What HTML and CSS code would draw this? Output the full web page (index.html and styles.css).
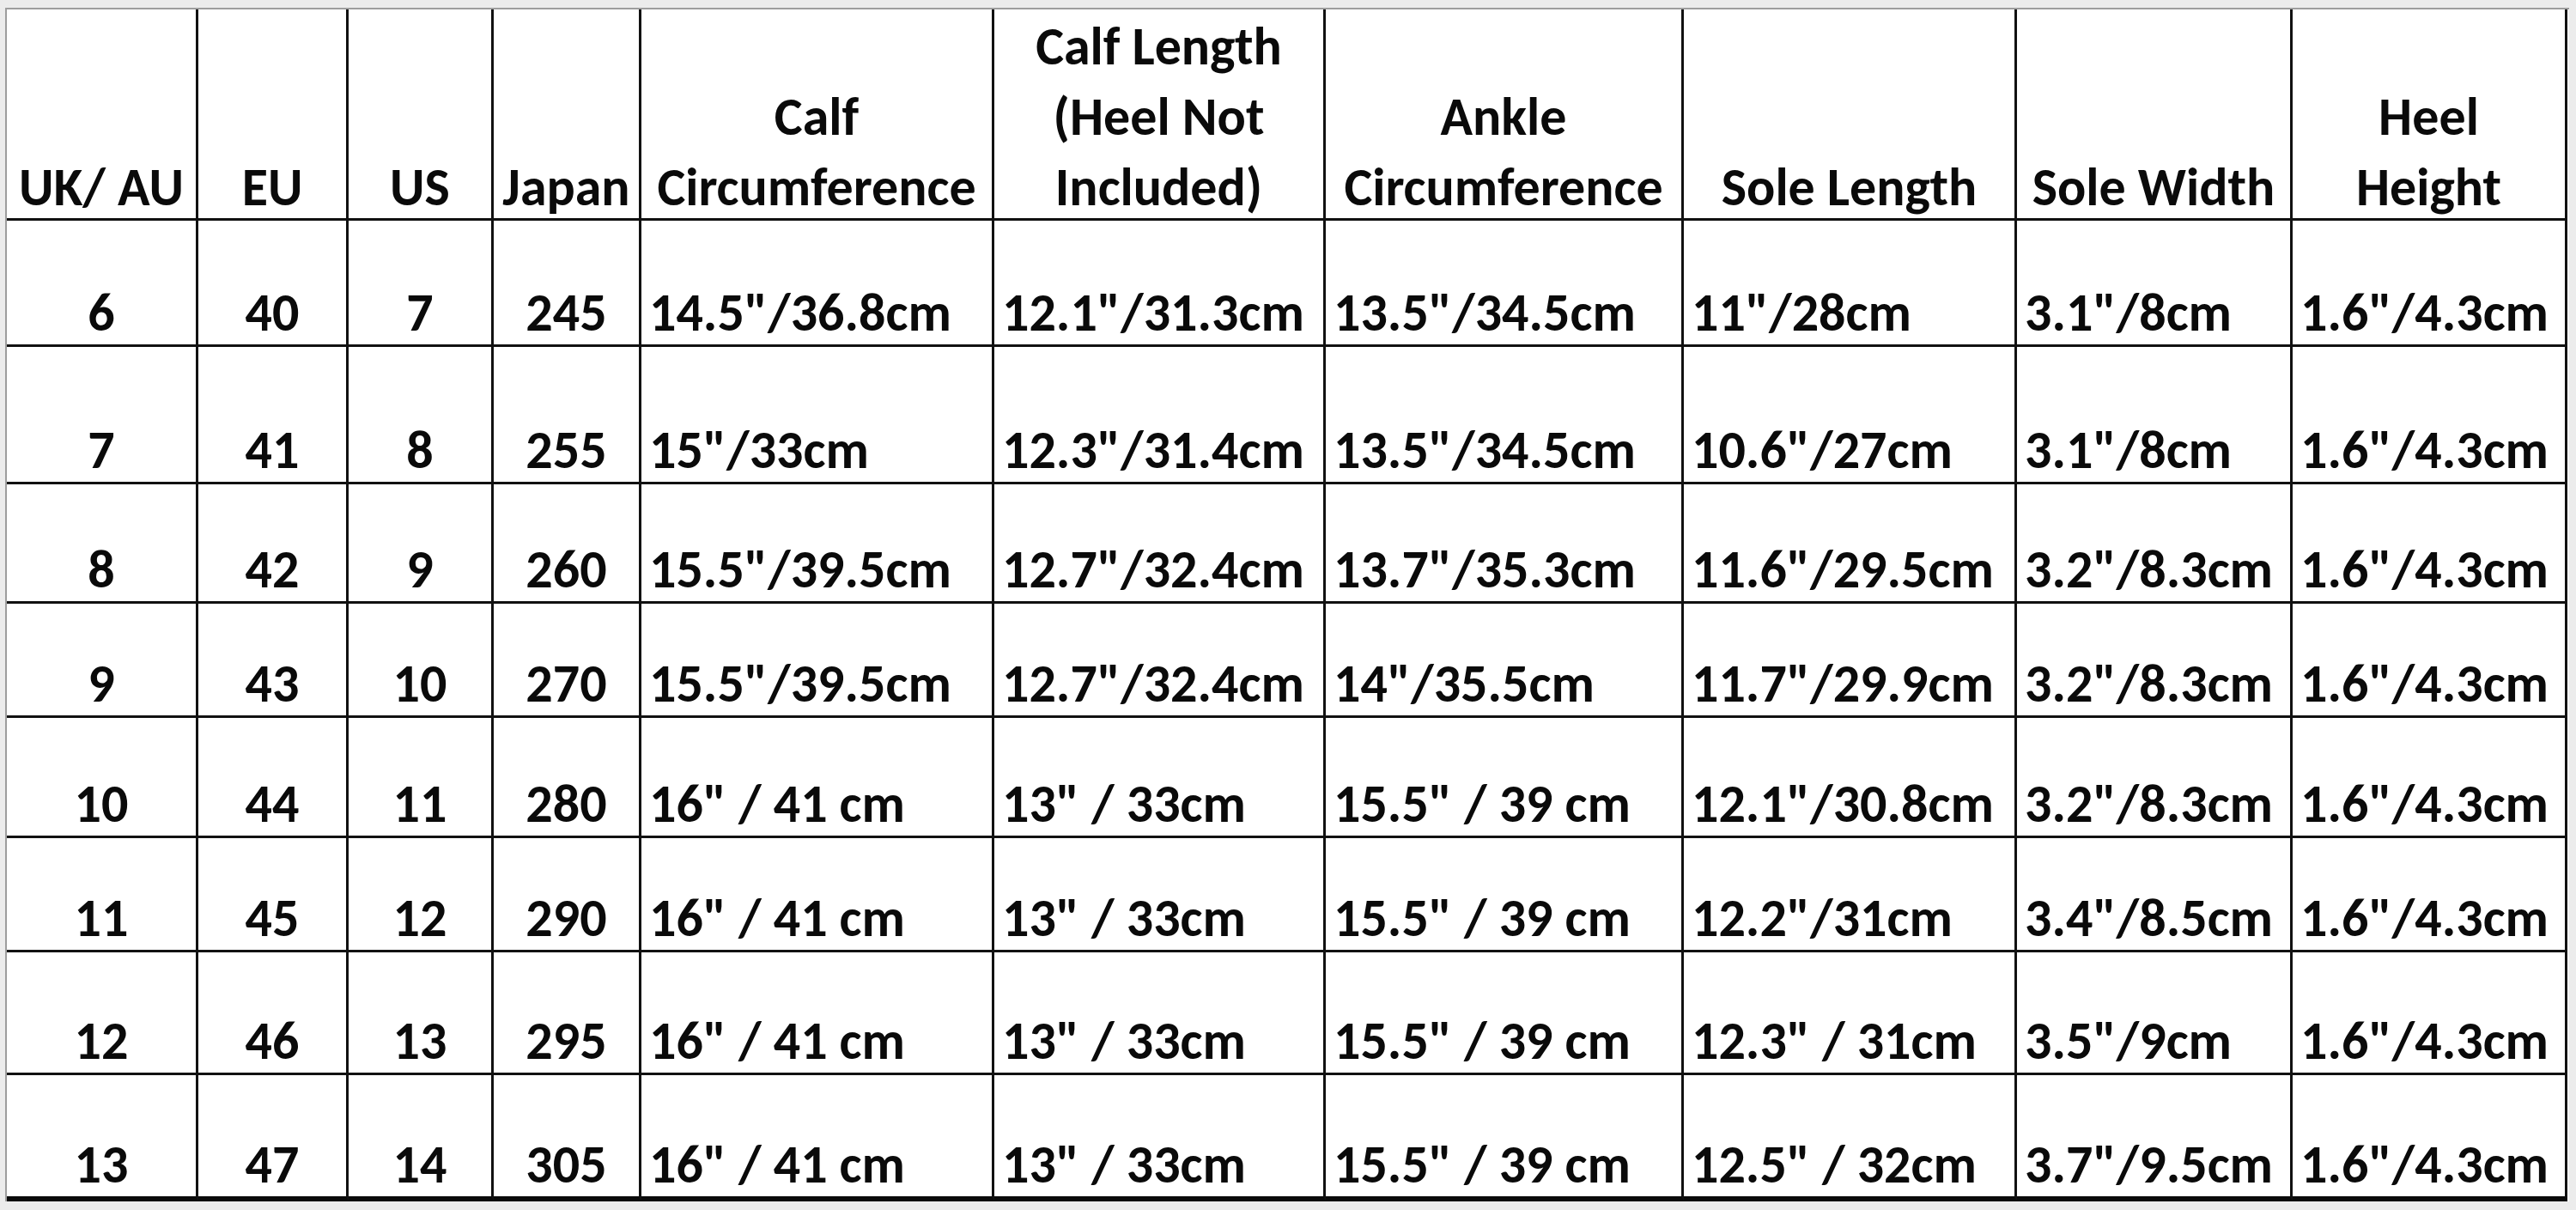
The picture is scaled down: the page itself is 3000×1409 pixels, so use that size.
FILE: index.html
```html
<!DOCTYPE html>
<html>
<head>
<meta charset="utf-8">
<title>Size Chart</title>
<link rel="stylesheet" href="styles.css">
</head>
<body>
<div class="sheet">
  <div class="grid">
    <div class="cell head center"><span class="label">UK/ AU</span></div>
    <div class="cell head center"><span class="label">EU</span></div>
    <div class="cell head center"><span class="label">US</span></div>
    <div class="cell head center"><span class="label">Japan</span></div>
    <div class="cell head center"><span class="label">Calf<br>Circumference</span></div>
    <div class="cell head center"><span class="label">Calf Length<br>(Heel Not<br>Included)</span></div>
    <div class="cell head center"><span class="label">Ankle<br>Circumference</span></div>
    <div class="cell head center"><span class="label">Sole Length</span></div>
    <div class="cell head center"><span class="label">Sole Width</span></div>
    <div class="cell head center"><span class="label">Heel<br>Height</span></div>

    <div class="cell center">6</div><div class="cell center">40</div><div class="cell center">7</div><div class="cell center">245</div>
    <div class="cell left">14.5"/36.8cm</div><div class="cell left">12.1"/31.3cm</div><div class="cell left">13.5"/34.5cm</div><div class="cell left">11"/28cm</div><div class="cell left">3.1"/8cm</div><div class="cell left">1.6"/4.3cm</div>

    <div class="cell center">7</div><div class="cell center">41</div><div class="cell center">8</div><div class="cell center">255</div>
    <div class="cell left">15"/33cm</div><div class="cell left">12.3"/31.4cm</div><div class="cell left">13.5"/34.5cm</div><div class="cell left">10.6"/27cm</div><div class="cell left">3.1"/8cm</div><div class="cell left">1.6"/4.3cm</div>

    <div class="cell center">8</div><div class="cell center">42</div><div class="cell center">9</div><div class="cell center">260</div>
    <div class="cell left">15.5"/39.5cm</div><div class="cell left">12.7"/32.4cm</div><div class="cell left">13.7"/35.3cm</div><div class="cell left">11.6"/29.5cm</div><div class="cell left">3.2"/8.3cm</div><div class="cell left">1.6"/4.3cm</div>

    <div class="cell center">9</div><div class="cell center">43</div><div class="cell center">10</div><div class="cell center">270</div>
    <div class="cell left">15.5"/39.5cm</div><div class="cell left">12.7"/32.4cm</div><div class="cell left">14"/35.5cm</div><div class="cell left">11.7"/29.9cm</div><div class="cell left">3.2"/8.3cm</div><div class="cell left">1.6"/4.3cm</div>

    <div class="cell center">10</div><div class="cell center">44</div><div class="cell center">11</div><div class="cell center">280</div>
    <div class="cell left">16" / 41 cm</div><div class="cell left">13" / 33cm</div><div class="cell left">15.5" / 39 cm</div><div class="cell left">12.1"/30.8cm</div><div class="cell left">3.2"/8.3cm</div><div class="cell left">1.6"/4.3cm</div>

    <div class="cell center">11</div><div class="cell center">45</div><div class="cell center">12</div><div class="cell center">290</div>
    <div class="cell left">16" / 41 cm</div><div class="cell left">13" / 33cm</div><div class="cell left">15.5" / 39 cm</div><div class="cell left">12.2"/31cm</div><div class="cell left">3.4"/8.5cm</div><div class="cell left">1.6"/4.3cm</div>

    <div class="cell center">12</div><div class="cell center">46</div><div class="cell center">13</div><div class="cell center">295</div>
    <div class="cell left">16" / 41 cm</div><div class="cell left">13" / 33cm</div><div class="cell left">15.5" / 39 cm</div><div class="cell left">12.3" / 31cm</div><div class="cell left">3.5"/9cm</div><div class="cell left">1.6"/4.3cm</div>

    <div class="cell center last">13</div><div class="cell center last">47</div><div class="cell center last">14</div><div class="cell center last">305</div>
    <div class="cell left last">16" / 41 cm</div><div class="cell left last">13" / 33cm</div><div class="cell left last">15.5" / 39 cm</div><div class="cell left last">12.5" / 32cm</div><div class="cell left last">3.7"/9.5cm</div><div class="cell left last">1.6"/4.3cm</div>
  </div>
</div>
</body>
</html>
```

FILE: styles.css
```css
html, body {
  margin: 0;
  padding: 0;
  background: #ffffff;
}

.sheet {
  width: 3000px;
  height: 1409px;
  box-sizing: border-box;
  padding: 9px 0 0 6px;
  background: #ececec;
  overflow: hidden;
}

.grid {
  display: grid;
  width: 2984px;
  grid-template-columns: 223px 175px 169px 172px 411px 386px 417px 388px 321px 320px;
  grid-template-rows: 246px 147px 160px 139px 133px 140px 133px 143px 147px;
  border-top: 2px solid #9d9d9d;
  border-left: 2px solid #9d9d9d;
  background: #ffffff;
  font-family: Carlito, Lato, "Open Sans", sans-serif;
  font-weight: 700;
  font-size: 62px;
  line-height: 74px;
  color: #0a0a0a;
}

.cell {
  box-sizing: border-box;
  border-right: 3px solid #111111;
  border-bottom: 3px solid #111111;
  display: flex;
  flex-direction: column;
  justify-content: flex-end;
  white-space: nowrap;
  overflow: hidden;
}

.cell.last {
  border-bottom: 6px solid #0a0a0a;
}

.center {
  text-align: center;
  align-items: center;
}

.left {
  text-align: left;
  align-items: flex-start;
  padding-left: 9px;
}

.head {
  line-height: 82px;
}

.label {
  display: block;
  margin-bottom: -5px;
}
```
